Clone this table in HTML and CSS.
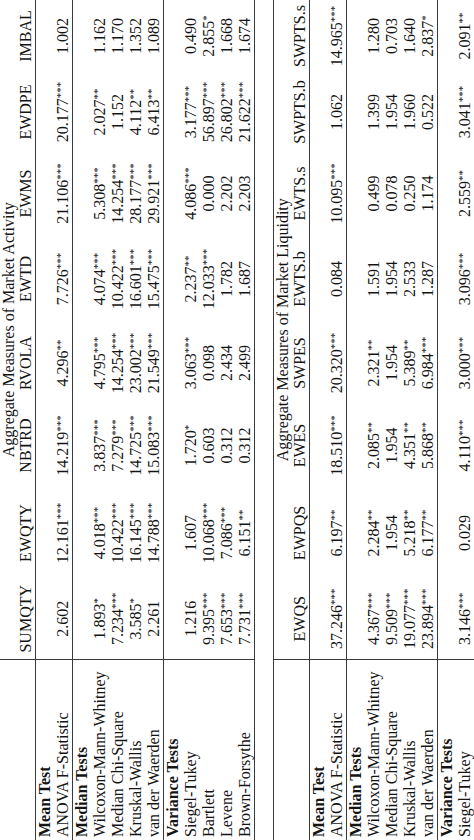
FILE: index.html
```html
<!DOCTYPE html>
<html>
<head>
<meta charset="utf-8">
<link rel="stylesheet" href="styles.css">
</head>
<body>
<div class="frame">
<div class="page">
  <table class="tbl t1">
    <colgroup>
      <col class="cl"><col class="w1"><col class="w2"><col class="w3"><col class="w4"><col class="w5"><col class="w6"><col class="w7"><col class="w8">
    </colgroup>
    <tr class="top cap"><td class="lab"></td><td colspan="8">Aggregate Measures of Market Activity</td></tr>
    <tr><td class="lab"></td><td>SUMQTY</td><td>EWQTY</td><td>NBTRD</td><td>RVOLA</td><td>EWTD</td><td>EWMS</td><td>EWDPE</td><td>IMBAL</td></tr>
    <tr class="sep"><td class="lab bold">Mean Test</td><td></td><td></td><td></td><td></td><td></td><td></td><td></td><td></td></tr>
    <tr><td class="lab">ANOVA F-Statistic</td><td>2.602</td><td>12.161<sup class="s">***</sup></td><td>14.219<sup class="s">***</sup></td><td>4.296<sup class="s">**</sup></td><td>7.726<sup class="s">***</sup></td><td>21.106<sup class="s">***</sup></td><td>20.177<sup class="s">***</sup></td><td>1.002</td></tr>
    <tr class="sep"><td class="lab bold">Median Tests</td><td></td><td></td><td></td><td></td><td></td><td></td><td></td><td></td></tr>
    <tr><td class="lab">Wilcoxon-Mann-Whitney</td><td>1.893<sup class="s">*</sup></td><td>4.018<sup class="s">***</sup></td><td>3.837<sup class="s">***</sup></td><td>4.795<sup class="s">***</sup></td><td>4.074<sup class="s">***</sup></td><td>5.308<sup class="s">***</sup></td><td>2.027<sup class="s">**</sup></td><td>1.162</td></tr>
    <tr><td class="lab">Median Chi-Square</td><td>7.234<sup class="s">***</sup></td><td>10.422<sup class="s">***</sup></td><td>7.279<sup class="s">***</sup></td><td>14.254<sup class="s">***</sup></td><td>10.422<sup class="s">***</sup></td><td>14.254<sup class="s">***</sup></td><td>1.152</td><td>1.170</td></tr>
    <tr><td class="lab">Kruskal-Wallis</td><td>3.585<sup class="s">*</sup></td><td>16.145<sup class="s">***</sup></td><td>14.725<sup class="s">***</sup></td><td>23.002<sup class="s">***</sup></td><td>16.601<sup class="s">***</sup></td><td>28.177<sup class="s">***</sup></td><td>4.112<sup class="s">**</sup></td><td>1.352</td></tr>
    <tr><td class="lab">van der Waerden</td><td>2.261</td><td>14.788<sup class="s">***</sup></td><td>15.083<sup class="s">***</sup></td><td>21.549<sup class="s">***</sup></td><td>15.475<sup class="s">***</sup></td><td>29.921<sup class="s">***</sup></td><td>6.413<sup class="s">**</sup></td><td>1.089</td></tr>
    <tr class="sep"><td class="lab bold">Variance Tests</td><td></td><td></td><td></td><td></td><td></td><td></td><td></td><td></td></tr>
    <tr><td class="lab">Siegel-Tukey</td><td>1.216</td><td>1.607</td><td>1.720<sup class="s">*</sup></td><td>3.063<sup class="s">***</sup></td><td>2.237<sup class="s">**</sup></td><td>4.086<sup class="s">***</sup></td><td>3.177<sup class="s">***</sup></td><td>0.490</td></tr>
    <tr><td class="lab">Bartlett</td><td>9.395<sup class="s">***</sup></td><td>10.068<sup class="s">***</sup></td><td>0.603</td><td>0.098</td><td>12.033<sup class="s">***</sup></td><td>0.000</td><td>56.897<sup class="s">***</sup></td><td>2.855<sup class="s">*</sup></td></tr>
    <tr><td class="lab">Levene</td><td>7.653<sup class="s">***</sup></td><td>7.086<sup class="s">***</sup></td><td>0.312</td><td>2.434</td><td>1.782</td><td>2.202</td><td>26.802<sup class="s">***</sup></td><td>1.668</td></tr>
    <tr class="bottom"><td class="lab">Brown-Forsythe</td><td>7.731<sup class="s">***</sup></td><td>6.151<sup class="s">**</sup></td><td>0.312</td><td>2.499</td><td>1.687</td><td>2.203</td><td>21.622<sup class="s">***</sup></td><td>1.674</td></tr>
  </table>

  <table class="tbl t2">
    <colgroup>
      <col class="cl"><col class="w1"><col class="w2"><col class="w3"><col class="w4"><col class="w5"><col class="w6"><col class="w7"><col class="w8">
    </colgroup>
    <tr class="top cap"><td class="lab"></td><td colspan="8">Aggregate Measures of Market Liquidity</td></tr>
    <tr><td class="lab"></td><td>EWQS</td><td>EWPQS</td><td>EWES</td><td>SWPES</td><td>EWTS.b</td><td>EWTS.s</td><td>SWPTS.b</td><td>SWPTS.s</td></tr>
    <tr class="sep"><td class="lab bold">Mean Test</td><td></td><td></td><td></td><td></td><td></td><td></td><td></td><td></td></tr>
    <tr><td class="lab">ANOVA F-Statistic</td><td>37.246<sup class="s">***</sup></td><td>6.197<sup class="s">**</sup></td><td>18.510<sup class="s">***</sup></td><td>20.320<sup class="s">***</sup></td><td>0.084</td><td>10.095<sup class="s">***</sup></td><td>1.062</td><td>14.965<sup class="s">***</sup></td></tr>
    <tr class="sep"><td class="lab bold">Median Tests</td><td></td><td></td><td></td><td></td><td></td><td></td><td></td><td></td></tr>
    <tr><td class="lab">Wilcoxon-Mann-Whitney</td><td>4.367<sup class="s">***</sup></td><td>2.284<sup class="s">**</sup></td><td>2.085<sup class="s">**</sup></td><td>2.321<sup class="s">**</sup></td><td>1.591</td><td>0.499</td><td>1.399</td><td>1.280</td></tr>
    <tr><td class="lab">Median Chi-Square</td><td>9.509<sup class="s">***</sup></td><td>1.954</td><td>1.954</td><td>1.954</td><td>1.954</td><td>0.078</td><td>1.954</td><td>0.703</td></tr>
    <tr><td class="lab">Kruskal-Wallis</td><td>19.077<sup class="s">***</sup></td><td>5.218<sup class="s">**</sup></td><td>4.351<sup class="s">**</sup></td><td>5.389<sup class="s">**</sup></td><td>2.533</td><td>0.250</td><td>1.960</td><td>1.640</td></tr>
    <tr><td class="lab">van der Waerden</td><td>23.894<sup class="s">***</sup></td><td>6.177<sup class="s">**</sup></td><td>5.868<sup class="s">**</sup></td><td>6.984<sup class="s">***</sup></td><td>1.287</td><td>1.174</td><td>0.522</td><td>2.837<sup class="s">*</sup></td></tr>
    <tr class="sep"><td class="lab bold">Variance Tests</td><td></td><td></td><td></td><td></td><td></td><td></td><td></td><td></td></tr>
    <tr><td class="lab">Siegel-Tukey</td><td>3.146<sup class="s">***</sup></td><td>0.029</td><td>4.110<sup class="s">***</sup></td><td>3.000<sup class="s">***</sup></td><td>3.096<sup class="s">***</sup></td><td>2.559<sup class="s">**</sup></td><td>3.041<sup class="s">***</sup></td><td>2.091<sup class="s">**</sup></td></tr>
  </table>
</div>
</div>
</body>
</html>
```

FILE: styles.css
```css
html, body {
  margin: 0;
  padding: 0;
  background: #ffffff;
  overflow: hidden;
}
body {
  width: 474px;
  height: 840px;
}
.frame {
  width: 474px;
  height: 840px;
  overflow: hidden;
  background: #ffffff;
}
.page {
  width: 840px;
  height: 474px;
  overflow: hidden;
  background: #ffffff;
  transform-origin: 0 0;
  transform: translate(0, 840px) rotate(-90deg);
  font-family: "Liberation Serif", "Times New Roman", serif;
  font-size: 16px;
  color: #141414;
}
.tbl {
  border-collapse: collapse;
  table-layout: fixed;
  width: 840px;
}
.t1 { margin-top: -1px; }
.t2 { margin-top: 18px; }
.cl { width: 180px; }
.w1 { width: 82px; }
.w2 { width: 90px; }
.w3 { width: 85px; }
.w4 { width: 80px; }
.w5 { width: 88px; }
.w6 { width: 83px; }
.w7 { width: 80px; }
.w8 { width: 72px; }
.tbl td {
  padding: 0;
  height: 18px;
  line-height: 18px;
  text-align: center;
  white-space: nowrap;
  overflow: visible;
}
.tbl td.lab {
  text-align: left;
  padding-left: 3px;
  border-right: 1px solid #3a3a3a;
}
.cap td { height: 17px; line-height: 17px; }
.top td { border-top: 1px solid #3a3a3a; }
.sep td { border-top: 1px solid #3a3a3a; }
.bottom td { border-bottom: 1px solid #3a3a3a; }
.bold { font-weight: bold; }
.s {
  font-size: 11px;
  line-height: 0;
  vertical-align: 4px;
}
```
